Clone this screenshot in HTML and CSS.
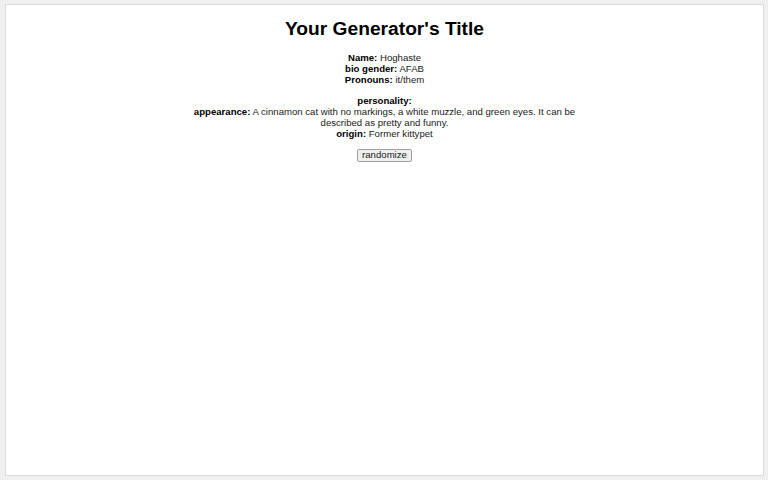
FILE: index.html
```html
<!DOCTYPE html>
<html>
<head>
<meta charset="utf-8">
<link rel="stylesheet" href="styles.css">
</head>
<body>
<div class="panel">
  <h1 class="title">Your Generator's Title</h1>
  <div class="output">
    <b>Name:</b> Hoghaste<br>
    <b>bio gender:</b> AFAB<br>
    <b>Pronouns:</b> it/them<br>
    <br>
    <b>personality:</b> <br>
    <b>appearance:</b> A cinnamon cat with no markings, a white muzzle, and green eyes. It can be described as pretty and funny.<br>
    <b>origin:</b> Former kittypet
  </div>
  <div class="actions"><button class="btn">randomize</button></div>
</div>
</body>
</html>
```
FILE: styles.css
```css
html, body {
  margin: 0;
  padding: 0;
}
body {
  background: #f0f0f0;
  padding: 4px 4px 4px 5px;
  font-family: "Liberation Sans", Arial, sans-serif;
  color: #1a1a1a;
}
.panel {
  background: #fff;
  border: 1px solid #dcdcdc;
  height: 472px;
  box-sizing: border-box;
  text-align: center;
}
.title {
  font-size: 19.2px;
  font-weight: bold;
  margin: 12px 0 0 0;
  line-height: 23px;
  color: #000;
}
.output {
  font-size: 9.6px;
  line-height: 10.86px;
  max-width: 392px;
  margin: 13px auto 0 auto;
}
.output b {
  color: #000;
}
.actions {
  margin-top: 9px;
  line-height: 0;
}
.btn {
  font-family: "Liberation Sans", Arial, sans-serif;
  font-size: 9.6px;
  line-height: 10px;
  padding: 0 4px 1px 4px;
  background: #efefef;
  border: 1px solid #a0a0a0;
  border-radius: 2px;
  color: #1a1a1a;
}
```
